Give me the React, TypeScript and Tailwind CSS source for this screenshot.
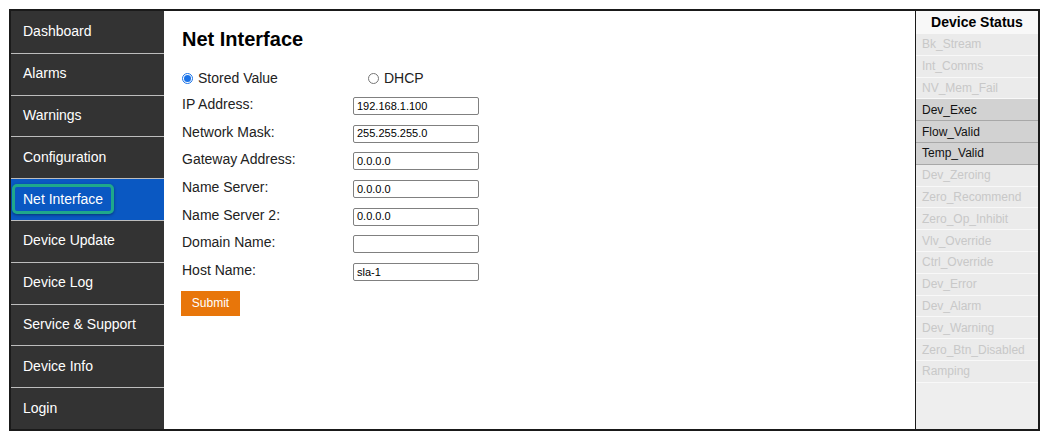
import React from 'react';

const navItems = [
  'Dashboard',
  'Alarms',
  'Warnings',
  'Configuration',
  'Net Interface',
  'Device Update',
  'Device Log',
  'Service & Support',
  'Device Info',
  'Login',
];

const fields = [
  { label: 'IP Address:', value: '192.168.1.100' },
  { label: 'Network Mask:', value: '255.255.255.0' },
  { label: 'Gateway Address:', value: '0.0.0.0' },
  { label: 'Name Server:', value: '0.0.0.0' },
  { label: 'Name Server 2:', value: '0.0.0.0' },
  { label: 'Domain Name:', value: '' },
  { label: 'Host Name:', value: 'sla-1' },
];

const statusFlags = [
  { name: 'Bk_Stream', on: false },
  { name: 'Int_Comms', on: false },
  { name: 'NV_Mem_Fail', on: false },
  { name: 'Dev_Exec', on: true },
  { name: 'Flow_Valid', on: true },
  { name: 'Temp_Valid', on: true },
  { name: 'Dev_Zeroing', on: false },
  { name: 'Zero_Recommend', on: false },
  { name: 'Zero_Op_Inhibit', on: false },
  { name: 'Vlv_Override', on: false },
  { name: 'Ctrl_Override', on: false },
  { name: 'Dev_Error', on: false },
  { name: 'Dev_Alarm', on: false },
  { name: 'Dev_Warning', on: false },
  { name: 'Zero_Btn_Disabled', on: false },
  { name: 'Ramping', on: false },
];

const Radio: React.FC<{ checked?: boolean; label: string }> = ({ checked, label }) => (
  <label className="flex items-center gap-[5px]">
    {checked ? (
      <span className="w-[11px] h-[11px] rounded-full border border-[#1a73e8] bg-white flex items-center justify-center">
        <span className="w-[7px] h-[7px] rounded-full bg-[#1a73e8]" />
      </span>
    ) : (
      <span className="w-[11px] h-[11px] rounded-full border border-[#767676] bg-white" />
    )}
    <span>{label}</span>
  </label>
);

export default function App() {
  const active = 'Net Interface';

  return (
    <div className="w-[1050px] h-[441px] bg-white pt-[9px] pl-[9px] font-['Liberation_Sans',Arial,sans-serif]">
      <div className="w-[1031px] h-[422px] border-2 border-[#1a1a1a] flex overflow-hidden">
        {/* Side menu */}
        <nav className="w-[153px] bg-[#333333] flex flex-col overflow-hidden">
          {navItems.map((item, i) => (
            <div
              key={item}
              className={`h-[41.8px] shrink-0 flex items-center pl-3 pb-px text-[14px] text-white ${i > 0 ? 'border-t-[1.5px] border-[#bdbdbd]' : ''} ${item === active ? 'bg-[#0a58c2]' : ''}`}
            >
              {item === active ? (
                <span className="-ml-[11px] border-[3px] border-[#1fa88b] rounded-[5px] px-[8px] py-[4px] leading-4 shadow-[0_1px_3px_rgba(0,0,0,0.4)]">
                  {item}
                </span>
              ) : (
                <span>{item}</span>
              )}
            </div>
          ))}
        </nav>

        {/* Form */}
        <main className="flex-1 bg-white pl-[18px] pt-[14px] text-[14px] text-[#222]">
          <h1 className="text-[20px] leading-[28px] font-bold text-black">Net Interface</h1>
          <div className="mt-[11px] h-[28px] flex items-center">
            <div className="w-[186px]">
              <Radio checked label="Stored Value" />
            </div>
            <Radio label="DHCP" />
          </div>
          {fields.map((f) => (
            <div key={f.label} className="h-[27.7px] flex items-center">
              <span className="w-[171px] -mt-[3px]">{f.label}</span>
              <div className="w-[126px] h-[18px] border border-[#808080] rounded-[2px] bg-white flex items-center px-[3px] text-[11px] text-black">
                {f.value}
              </div>
            </div>
          ))}
          <button className="mt-[5px] -ml-px h-[25px] w-[59px] bg-[#e8760a] text-white text-[12px]">
            Submit
          </button>
        </main>

        {/* Status panel */}
        <aside className="w-[123px] border-l border-[#1a1a1a] bg-[#eeeeee] flex flex-col">
          <div className="h-[23px] shrink-0 bg-[#f8f8f8] flex items-center justify-center text-[14px] font-bold text-black">
            Device Status
          </div>
          {statusFlags.map((s) => (
            <div
              key={s.name}
              className={`h-[21.8px] shrink-0 flex items-center pl-[6px] text-[12px] border-b ${
                s.on
                  ? 'bg-[#d2d2d2] text-[#111] border-[#a8a8a8]'
                  : 'bg-[#ebebeb] text-[#c8c8c8] border-[#f8f8f8]'
              }`}
            >
              {s.name}
            </div>
          ))}
        </aside>
      </div>
    </div>
  );
}
